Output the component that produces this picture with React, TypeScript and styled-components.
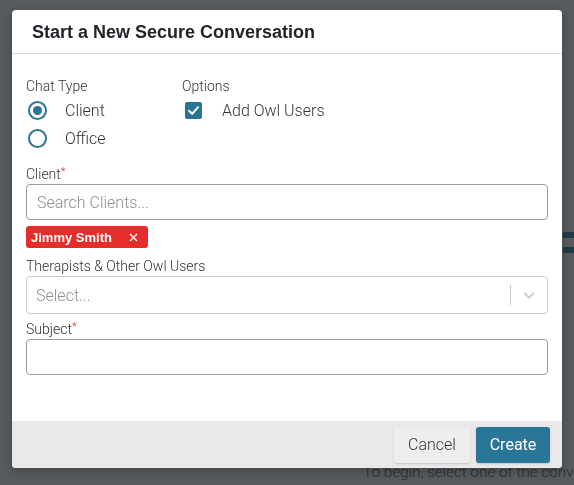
import React from "react";
import styled, { createGlobalStyle } from "styled-components";

const GlobalStyle = createGlobalStyle`
  html, body { margin: 0; padding: 0; }
  body {
    width: 574px;
    height: 485px;
    overflow: hidden;
    font-family: Roboto, "Liberation Sans", Arial, sans-serif;
    -webkit-font-smoothing: antialiased;
  }
  * { box-sizing: border-box; }
`;

const teal = "#2a7594";

const Page = styled.div`
  width: 574px;
  height: 485px;
  background: #575b5e;
  display: flex;
  flex-direction: column;
  overflow: hidden;
`;

const SideBars = styled.div`
  align-self: flex-end;
  width: 11px;
  margin-top: 232px;
  display: flex;
  flex-direction: column;
  gap: 9px;
`;

const SideBar = styled.div`
  height: 6px;
  background: #1e3b47;
`;

const Message = styled.div`
  margin-top: 209px;
  padding-left: 363px;
  white-space: nowrap;
  font-family: Roboto, "Liberation Sans", sans-serif;
  font-weight: 300;
  font-size: 15.5px;
  line-height: 20px;
  letter-spacing: -0.1px;
  color: #2a2d30;
`;

const Overlay = styled.div`
  position: fixed;
  inset: 0;
  padding: 10px 0 0 12px;
`;

const Dialog = styled.div`
  width: 550px;
  height: 458px;
  background: #fff;
  border-radius: 4px;
  overflow: hidden;
  display: flex;
  flex-direction: column;
  box-shadow: 0 3px 10px rgba(0, 0, 0, 0.25);
`;

const Header = styled.div`
  height: 44px;
  padding: 0 20px;
  display: flex;
  align-items: center;
  border-bottom: 1px solid #dadada;
`;

const Title = styled.h2`
  margin: 0;
  font-family: "Liberation Sans", Arial, sans-serif;
  font-weight: 700;
  font-size: 18px;
  color: #212529;
  padding-top: 1px;
`;

const Body = styled.div`
  flex: 1;
  padding: 24px 14px 0;
  display: flex;
  flex-direction: column;
`;

const TopRow = styled.div`
  display: flex;
`;

const Column = styled.div<{ $width?: number }>`
  display: flex;
  flex-direction: column;
  width: ${(p) => (p.$width ? `${p.$width}px` : "auto")};
`;

const FieldLabel = styled.label<{ $top?: number }>`
  display: block;
  margin-top: ${(p) => p.$top ?? 0}px;
  margin-bottom: 1px;
  font-weight: 300;
  font-size: 14px;
  line-height: 17px;
  color: #333;
`;

const Required = styled.span`
  color: #e0302c;
  font-size: 11px;
  vertical-align: top;
  line-height: 12px;
`;

const OptionRow = styled.div`
  height: 28px;
  display: flex;
  align-items: center;
  font-weight: 300;
  font-size: 16px;
  color: #333;
`;

const Radio = styled.span<{ $checked?: boolean }>`
  width: 19px;
  height: 19px;
  margin-left: 2px;
  margin-right: 18px;
  border-radius: 50%;
  border: 2.5px solid ${teal};
  display: flex;
  align-items: center;
  justify-content: center;
  &::after {
    content: "";
    width: 9px;
    height: 9px;
    border-radius: 50%;
    background: ${(p) => (p.$checked ? teal : "transparent")};
  }
`;

const CheckBox = styled.span`
  width: 17px;
  height: 17px;
  margin-left: 3px;
  margin-right: 20px;
  border-radius: 2px;
  background: ${teal};
  display: flex;
  align-items: center;
  justify-content: center;
`;

const TextInput = styled.div`
  height: 36px;
  border: 1px solid #9b9b9b;
  border-radius: 4px;
  padding: 0 10px;
  display: flex;
  align-items: center;
  font-size: 16px;
  font-weight: 300;
  color: #8e8e8e;
`;

const Tag = styled.div`
  align-self: flex-start;
  margin-top: 6px;
  height: 22px;
  padding: 0 10px 0 5px;
  border-radius: 3px;
  background: #e52e2b;
  color: #fff;
  display: flex;
  align-items: center;
  font-family: "Liberation Sans", Arial, sans-serif;
  font-weight: 700;
  font-size: 13px;
`;

const TagClose = styled.span`
  margin-left: 17px;
  display: flex;
  align-items: center;
`;

const SelectBox = styled.div`
  height: 38px;
  border: 1px solid #cccccc;
  border-radius: 4px;
  display: flex;
  align-items: center;
`;

const SelectValue = styled.div`
  flex: 1;
  padding: 0 9px;
  font-size: 16px;
  font-weight: 300;
  color: #8e8e8e;
`;

const Separator = styled.span`
  width: 1px;
  height: 20px;
  background: #cccccc;
`;

const Indicator = styled.div`
  width: 36px;
  display: flex;
  align-items: center;
  justify-content: center;
  color: #cccccc;
`;

const Footer = styled.div`
  height: 47px;
  background: #e9e9e9;
  padding: 0 12px;
  display: flex;
  align-items: center;
  justify-content: flex-end;
  gap: 6px;
`;

const Button = styled.button<{ $primary?: boolean; $width: number }>`
  width: ${(p) => p.$width}px;
  height: 36px;
  border: none;
  border-radius: 3px;
  font-family: Roboto, "Liberation Sans", sans-serif;
  font-size: 16px;
  font-weight: ${(p) => (p.$primary ? 400 : 300)};
  color: ${(p) => (p.$primary ? "#fff" : "#333")};
  background: ${(p) => (p.$primary ? "#2a7696" : "#eeeeee")};
  box-shadow: 0 1px 2px rgba(0, 0, 0, 0.15);
  cursor: pointer;
`;

export default function App() {
  return (
    <>
      <GlobalStyle />
      <Page>
        <SideBars>
          <SideBar />
          <SideBar />
        </SideBars>
        <Message>To begin, select one of the conversations</Message>
      </Page>
      <Overlay>
        <Dialog>
          <Header>
            <Title>Start a New Secure Conversation</Title>
          </Header>
          <Body>
            <TopRow>
              <Column $width={156}>
                <FieldLabel>Chat Type</FieldLabel>
                <OptionRow>
                  <Radio $checked />
                  Client
                </OptionRow>
                <OptionRow>
                  <Radio />
                  Office
                </OptionRow>
              </Column>
              <Column>
                <FieldLabel>Options</FieldLabel>
                <OptionRow>
                  <CheckBox>
                    <svg width="13" height="13" viewBox="0 0 13 13">
                      <path d="M2 6.8 L5.2 9.8 L11 3.2" fill="none" stroke="#fff" strokeWidth="2" strokeLinecap="round" strokeLinejoin="round" />
                    </svg>
                  </CheckBox>
                  Add Owl Users
                </OptionRow>
              </Column>
            </TopRow>

            <FieldLabel $top={14}>
              Client<Required>*</Required>
            </FieldLabel>
            <TextInput>Search Clients...</TextInput>
            <Tag>
              Jimmy Smith
              <TagClose>
                <svg width="9" height="9" viewBox="0 0 9 9">
                  <path d="M1 1 L8 8 M8 1 L1 8" stroke="#fff" strokeWidth="1.3" />
                </svg>
              </TagClose>
            </Tag>

            <FieldLabel $top={10}>Therapists &amp; Other Owl Users</FieldLabel>
            <SelectBox>
              <SelectValue>Select...</SelectValue>
              <Separator />
              <Indicator>
                <svg width="18" height="18" viewBox="0 0 20 20" fill="currentColor">
                  <path d="M4.516 7.548c0.436-0.446 1.043-0.481 1.576 0l3.908 3.747 3.908-3.747c0.533-0.481 1.141-0.446 1.574 0 0.436 0.445 0.408 1.197 0 1.615-0.406 0.418-4.695 4.502-4.695 4.502-0.217 0.223-0.502 0.335-0.787 0.335s-0.57-0.112-0.789-0.335c0 0-4.287-4.084-4.695-4.502s-0.436-1.17 0-1.615z" />
                </svg>
              </Indicator>
            </SelectBox>

            <FieldLabel $top={7}>
              Subject<Required>*</Required>
            </FieldLabel>
            <TextInput />
          </Body>
          <Footer>
            <Button $width={76}>Cancel</Button>
            <Button $primary $width={74}>Create</Button>
          </Footer>
        </Dialog>
      </Overlay>
    </>
  );
}
